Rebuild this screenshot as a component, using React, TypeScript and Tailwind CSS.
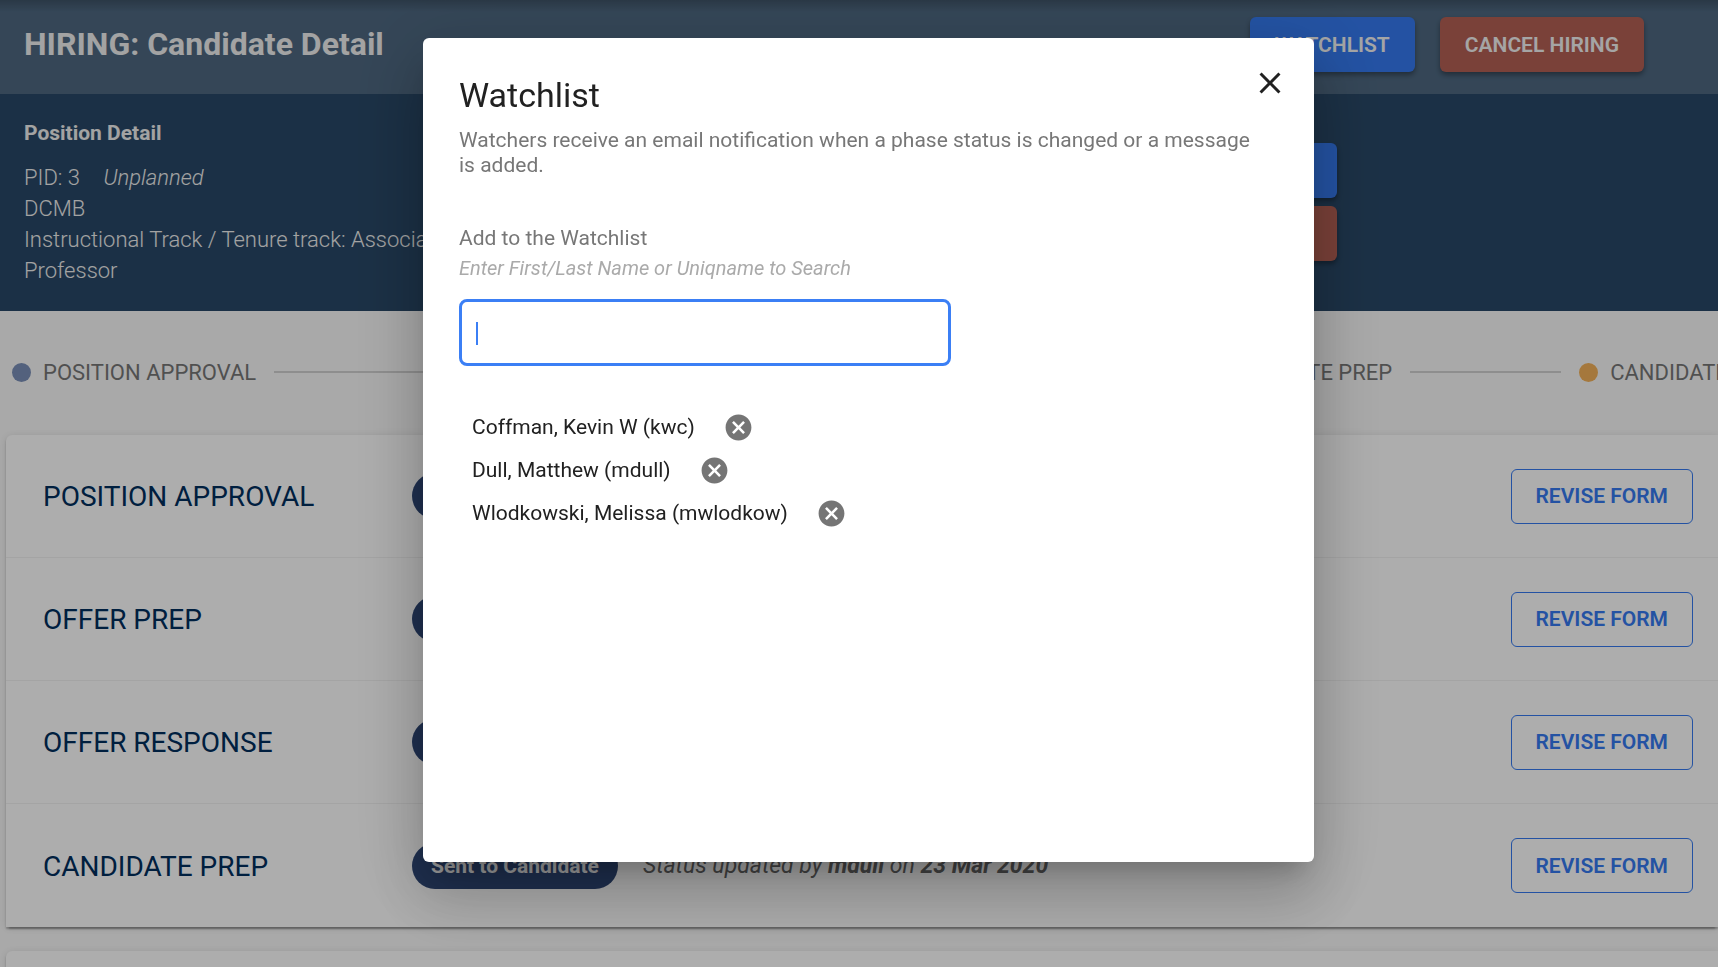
import React, { ReactElement, useState } from 'react';
import clsx from 'clsx';
import { MdCancel, MdClose } from 'react-icons/md';

type Phase = {
  name: string;
  status: string;
  updatedBy?: string;
  updatedOn?: string;
};

type Watcher = {
  name: string;
  uniqname: string;
};

const steps: { label: string; done: boolean }[] = [
  { label: 'POSITION APPROVAL', done: true },
  { label: 'OFFER PREP', done: true },
  { label: 'OFFER RESPONSE', done: true },
  { label: 'CANDIDATE PREP', done: true },
  { label: 'CANDIDATE RESPONSE', done: false },
];

const phases: Phase[] = [
  { name: 'POSITION APPROVAL', status: 'Approved' },
  { name: 'OFFER PREP', status: 'Approved' },
  { name: 'OFFER RESPONSE', status: 'Accepted' },
  {
    name: 'CANDIDATE PREP',
    status: 'Sent to Candidate',
    updatedBy: 'mdull',
    updatedOn: '23 Mar 2020',
  },
];

const initialWatchers: Watcher[] = [
  { name: 'Coffman, Kevin W', uniqname: 'kwc' },
  { name: 'Dull, Matthew', uniqname: 'mdull' },
  { name: 'Wlodkowski, Melissa', uniqname: 'mwlodkow' },
];

const raised =
  'h-[55px] rounded-md px-[25px] pt-0.5 text-[21px] font-semibold text-[#f4f4f4] shadow-[0_3px_5px_rgba(0,0,0,0.35)]';

const cardShadow =
  'shadow-[0_5px_2px_-3px_rgba(0,0,0,0.2),0_2px_2px_rgba(0,0,0,0.24),0_1px_8px_rgba(0,0,0,0.12)]';

function PageHeader({ onWatchlist }: { onWatchlist: () => void }) {
  return (
    <header className="flex h-[94px] items-start justify-between bg-[#4e6881] bg-linear-to-b from-black/20 to-transparent to-[12px] pt-[17px] pr-[74px] pl-6">
      <h1 className="text-[32px] leading-[55px] font-bold text-[#f0f0f0]">
        HIRING: Candidate Detail
      </h1>
      <div className="flex gap-[25px]">
        <button type="button" onClick={onWatchlist} className={clsx(raised, 'bg-[#357af0]')}>
          WATCHLIST
        </button>
        <button type="button" className={clsx(raised, 'bg-[#b46054]')}>
          CANCEL HIRING
        </button>
      </div>
    </header>
  );
}

function PositionSummary() {
  return (
    <section className="flex justify-between bg-[#294867] pt-6 pr-[381px] pb-[25px] pl-6 text-[22px] leading-[31px] text-[#f0f0f0]">
      <div className="w-[440px]">
        <h2 className="mb-[13px] text-[21px] font-bold">Position Detail</h2>
        <div className="font-light">
          <p>
            PID: 3 <em className="ml-[18px]">Unplanned</em>
          </p>
          <p>DCMB</p>
          <p>Instructional Track / Tenure track: Associate Professor</p>
        </div>
      </div>
      <div className="flex w-[200px] flex-col gap-2 pt-[25px]">
        <button type="button" aria-label="Edit candidate" className={clsx(raised, 'bg-[#357af0]')} />
        <button type="button" aria-label="Remove candidate" className={clsx(raised, 'bg-[#b46054]')} />
      </div>
    </section>
  );
}

function Stepper() {
  return (
    <ol className="flex h-[124px] items-center pb-0.5 pl-3 text-[22px] text-[#777777]">
      {steps.map((step, index) => (
        <li key={step.label} className="flex shrink-0 items-center">
          <span
            className={clsx(
              'size-[19px] rounded-full',
              step.done ? 'bg-[#7b90b8]' : 'bg-[#f3b25a]'
            )}
          />
          <span className="ml-3 whitespace-nowrap">{step.label}</span>
          {index < steps.length - 1 && (
            <span className="mx-[18px] h-0.5 w-[151px] bg-[#d2d2d2]" />
          )}
        </li>
      ))}
    </ol>
  );
}

function PhaseRow({ phase }: { phase: Phase }) {
  return (
    <li className="flex h-[123px] items-center border-b border-[#f2f2f2] pr-[25px] pl-[37px] last:border-b-0">
      <h3 className="w-[369px] pt-0.5 text-[28px] text-[#002e5d]">{phase.name}</h3>
      <span className="rounded-full bg-[#2e4776] px-[19px] text-[21px] leading-[46px] font-bold text-[#f0f0f0]">
        {phase.status}
      </span>
      {phase.updatedBy && (
        <p className="ml-[25px] pt-0.5 text-[23px] text-[#666666] italic">
          Status updated by <b>{phase.updatedBy}</b> on <b>{phase.updatedOn}</b>
        </p>
      )}
      <button
        type="button"
        className="ml-auto h-[55px] rounded-md border border-[#357af0] px-6 pt-0.5 text-[21px] font-semibold text-[#357af0]"
      >
        REVISE FORM
      </button>
    </li>
  );
}

function WatchlistDialog({ onClose }: { onClose: () => void }): ReactElement {
  const [watchers, setWatchers] = useState(initialWatchers);
  const [search, setSearch] = useState('');

  const handleRemove = (uniqname: string) => {
    setWatchers(watchers.filter(watcher => watcher.uniqname !== uniqname));
  };

  return (
    <div className="fixed inset-0 flex items-start justify-center bg-black/32 pt-[38px] pl-[19px]">
      <div
        role="dialog"
        aria-modal="true"
        aria-labelledby="watchlist-title"
        className="relative min-h-[824px] w-full max-w-[891px] rounded-md bg-white px-9 py-[37px] text-[21px] leading-[25px] text-[#777777] shadow-[0_17px_23px_-11px_rgba(0,0,0,0.2),0_37px_58px_5px_rgba(0,0,0,0.14),0_14px_71px_12px_rgba(0,0,0,0.12)]"
      >
        <button
          type="button"
          aria-label="Close"
          onClick={onClose}
          className="absolute top-[27px] right-[26px] text-[#212121]"
        >
          <MdClose className="size-9" />
        </button>

        <h2 id="watchlist-title" className="text-[34px] leading-10 text-[#212121]">
          Watchlist
        </h2>
        <p className="mt-[13px] pr-5">
          Watchers receive an email notification when a phase status is changed or a message is
          added.
        </p>

        <label htmlFor="watcher-search" className="mt-12 block">
          Add to the Watchlist
        </label>
        <p id="watcher-hint" className="mt-[5px] text-[20px] text-[#aaaaaa] italic">
          Enter First/Last Name or Uniqname to Search
        </p>
        <div className="relative mt-[18px] w-[492px]">
          <input
            id="watcher-search"
            type="text"
            value={search}
            onChange={event => setSearch(event.target.value)}
            aria-describedby="watcher-hint"
            className="block h-[67px] w-full rounded-lg border-3 border-[#3b7ff5] px-[15px] text-[#212121] caret-transparent outline-none"
          />
          {/* Cursor shown while the field is empty */}
          {search === '' && (
            <span className="absolute top-[23px] left-[17px] h-[23px] w-0.5 bg-[#3b7ff5]" />
          )}
        </div>

        <ul className="mt-10 ml-[13px] text-[#212121]">
          {watchers.map(watcher => (
            <li key={watcher.uniqname} className="flex h-[43px] items-center gap-7">
              {`${watcher.name} (${watcher.uniqname})`}
              <button
                type="button"
                aria-label={`Remove ${watcher.name}`}
                onClick={() => handleRemove(watcher.uniqname)}
                className="text-[#757575]"
              >
                <MdCancel className="size-[31px]" />
              </button>
            </li>
          ))}
        </ul>
      </div>
    </div>
  );
}

export default function App(): ReactElement {
  const [watchlistOpen, setWatchlistOpen] = useState(true);

  return (
    <div className="h-screen overflow-hidden bg-[#fafafa] font-['Roboto',sans-serif]">
      <PageHeader onWatchlist={() => setWatchlistOpen(true)} />
      <PositionSummary />
      <main>
        <Stepper />
        <ul className={clsx('ml-1.5 rounded-tl-md bg-white', cardShadow)}>
          {phases.map(phase => (
            <PhaseRow key={phase.name} phase={phase} />
          ))}
        </ul>
        <section className={clsx('mt-6 ml-1.5 h-40 rounded-tl-md bg-white', cardShadow)} />
      </main>
      {watchlistOpen && <WatchlistDialog onClose={() => setWatchlistOpen(false)} />}
    </div>
  );
}
